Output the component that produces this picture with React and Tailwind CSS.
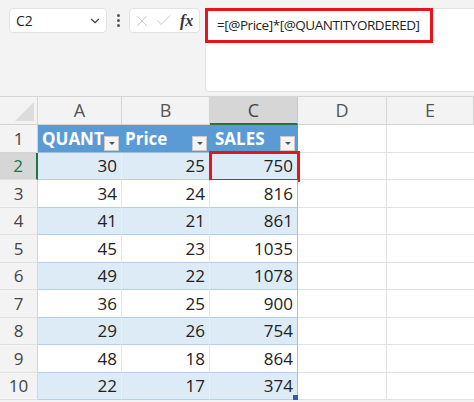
import React from 'react';
import { ChevronDown, X, Check } from 'lucide-react';

const cols = [
  { key: 'A', w: 'w-[84px]' },
  { key: 'B', w: 'w-[88px]' },
  { key: 'C', w: 'w-[88px]' },
  { key: 'D', w: 'w-[89px]' },
  { key: 'E', w: 'flex-1' },
];

const rows = [
  [30, 25, 750],
  [34, 24, 816],
  [41, 21, 861],
  [45, 23, 1035],
  [49, 22, 1078],
  [36, 25, 900],
  [29, 26, 754],
  [48, 18, 864],
  [22, 17, 374],
];

const FilterButton = () => (
  <div className="absolute right-[3px] bottom-[1px] w-[15px] h-[15px] bg-[#f4f4f4] border border-[#c9c9c9] flex items-center justify-center">
    <div className="w-0 h-0 border-l-[3px] border-r-[3px] border-t-[3px] border-l-transparent border-r-transparent border-t-[#555]" />
  </div>
);

const FormulaBar = () => (
  <div className="h-[97px] flex items-start pt-2 pl-[9px] border-b border-[#d6d6d6]">
    {/* name box */}
    <div className="w-[98px] h-[25px] bg-white rounded border border-[#e2e2e2] flex items-center justify-between pl-[6px] pr-[4px]">
      <span className="text-[14px] text-[#222]">C2</span>
      <ChevronDown className="w-[14px] h-[14px] text-[#444]" strokeWidth={2} />
    </div>
    <div className="w-[22px] h-[25px] flex flex-col items-center justify-center gap-[2px]">
      <div className="w-[3px] h-[3px] rounded-full bg-[#555]" />
      <div className="w-[3px] h-[3px] rounded-full bg-[#555]" />
      <div className="w-[3px] h-[3px] rounded-full bg-[#555]" />
    </div>
    {/* cancel / enter / fx */}
    <div className="w-[71px] h-[25px] bg-white rounded border border-[#e2e2e2] flex items-center pl-[3px] gap-[3px]">
      <X className="w-[18px] h-[18px] text-[#c4c4c4]" strokeWidth={1.2} />
      <Check className="w-[19px] h-[19px] text-[#c4c4c4]" strokeWidth={1.2} />
      <span className="ml-[4px] text-[16px] italic font-semibold text-[#333] font-['Liberation_Serif',serif]">fx</span>
    </div>
    {/* formula box */}
    <div className="relative ml-[5px] flex-1 h-[84px] bg-white rounded-l border border-[#e2e2e2] border-r-0">
      <div className="absolute left-[-1px] top-[-1px] w-[228px] h-[35px] border-[3px] border-[#e8141b]" />
      <div className="pl-[11px] pt-[6px] text-[13.5px] text-[#222] tracking-[-0.45px]">=[@Price]*[@QUANTITYORDERED]</div>
    </div>
  </div>
);

const App = () => {
  return (
    <div className="w-[474px] h-[402px] overflow-hidden bg-[#f3f3f3] font-['Open_Sans',sans-serif]">
      <FormulaBar />

      {/* column headers */}
      <div className="flex h-[28px] bg-[#f3f3f3]">
        <div className="w-[38px] border-r border-b border-[#d4d4d4] relative">
          <div className="absolute right-[3px] bottom-[3px] w-0 h-0 border-b-[19px] border-l-[19px] border-b-[#dcdcdc] border-l-transparent" />
        </div>
        {cols.map((c) => (
          <div
            key={c.key}
            className={`${c.w} flex items-center justify-center text-[18px] border-r ${
              c.key === 'C'
                ? 'bg-[#d6d6d6] text-[#444] border-b-2 border-b-[#217346] border-r-[#c8c8c8]'
                : 'text-[#555] border-b border-[#d4d4d4]'
            }`}
          >
            {c.key}
          </div>
        ))}
      </div>

      {/* row 1: table header */}
      <div className="flex h-[27.5px] bg-white">
        <div className="w-[38px] flex items-center justify-center text-[17px] text-[#444] bg-[#f3f3f3] border-r border-b border-[#d4d4d4]">1</div>
        <div className="w-[84px] relative bg-[#5b9bd5] text-white font-bold text-[17px] pl-[4px] flex items-center overflow-hidden border-b border-[#9bc2e6]">
          QUANT
          <FilterButton />
        </div>
        <div className="w-[88px] relative bg-[#5b9bd5] text-white font-bold text-[17px] pl-[3px] flex items-center border-b border-[#9bc2e6]">
          Price
          <FilterButton />
        </div>
        <div className="w-[88px] relative bg-[#5b9bd5] text-white font-bold text-[17px] pl-[5px] flex items-center border-b border-[#9bc2e6]">
          SALES
          <FilterButton />
        </div>
        <div className="w-[89px] border-r border-b border-[#e1e1e1]" />
        <div className="flex-1 border-b border-[#e1e1e1]" />
      </div>

      {rows.map((r, i) => {
        const n = i + 2;
        const band = n % 2 === 0;
        const selected = n === 2;
        const cellBg = band ? 'bg-[#ddebf7]' : 'bg-white';
        return (
          <div key={n} className="flex h-[27.5px] bg-white">
            <div
              className={`w-[38px] flex items-center justify-center text-[17px] border-b border-[#e1e1e1] ${
                selected
                  ? 'bg-[#d6d6d6] text-[#217346] border-r-2 border-r-[#217346]'
                  : 'bg-[#f3f3f3] text-[#444] border-r border-r-[#d4d4d4]'
              }`}
            >
              {n}
            </div>
            {r.map((v, j) => (
              <div
                key={j}
                className={`${j === 0 ? 'w-[84px]' : 'w-[88px]'} relative ${cellBg} flex items-center justify-end pr-[4px] text-[17px] text-[#222] border-b border-b-[#b4cfe9] border-r ${
                  j === 2 ? 'border-r-[#9bc2e6]' : band ? 'border-r-[#e8eff7]' : 'border-r-[#e6e6e6]'
                }`}
              >
                {v}
                {selected && j === 2 && (
                  <div className="absolute left-[-1px] top-[-2px] w-[91px] h-[31px] border-[3px] border-[#e8141b]" />
                )}
                {n === 10 && j === 2 && (
                  <div className="absolute right-[-1px] bottom-[-1px] w-[5px] h-[5px] bg-[#2e5ea8]" />
                )}
              </div>
            ))}
            <div className="w-[89px] border-r border-b border-[#e1e1e1]" />
            <div className="flex-1 border-b border-[#e1e1e1]" />
          </div>
        );
      })}
    </div>
  );
};

export default App;
